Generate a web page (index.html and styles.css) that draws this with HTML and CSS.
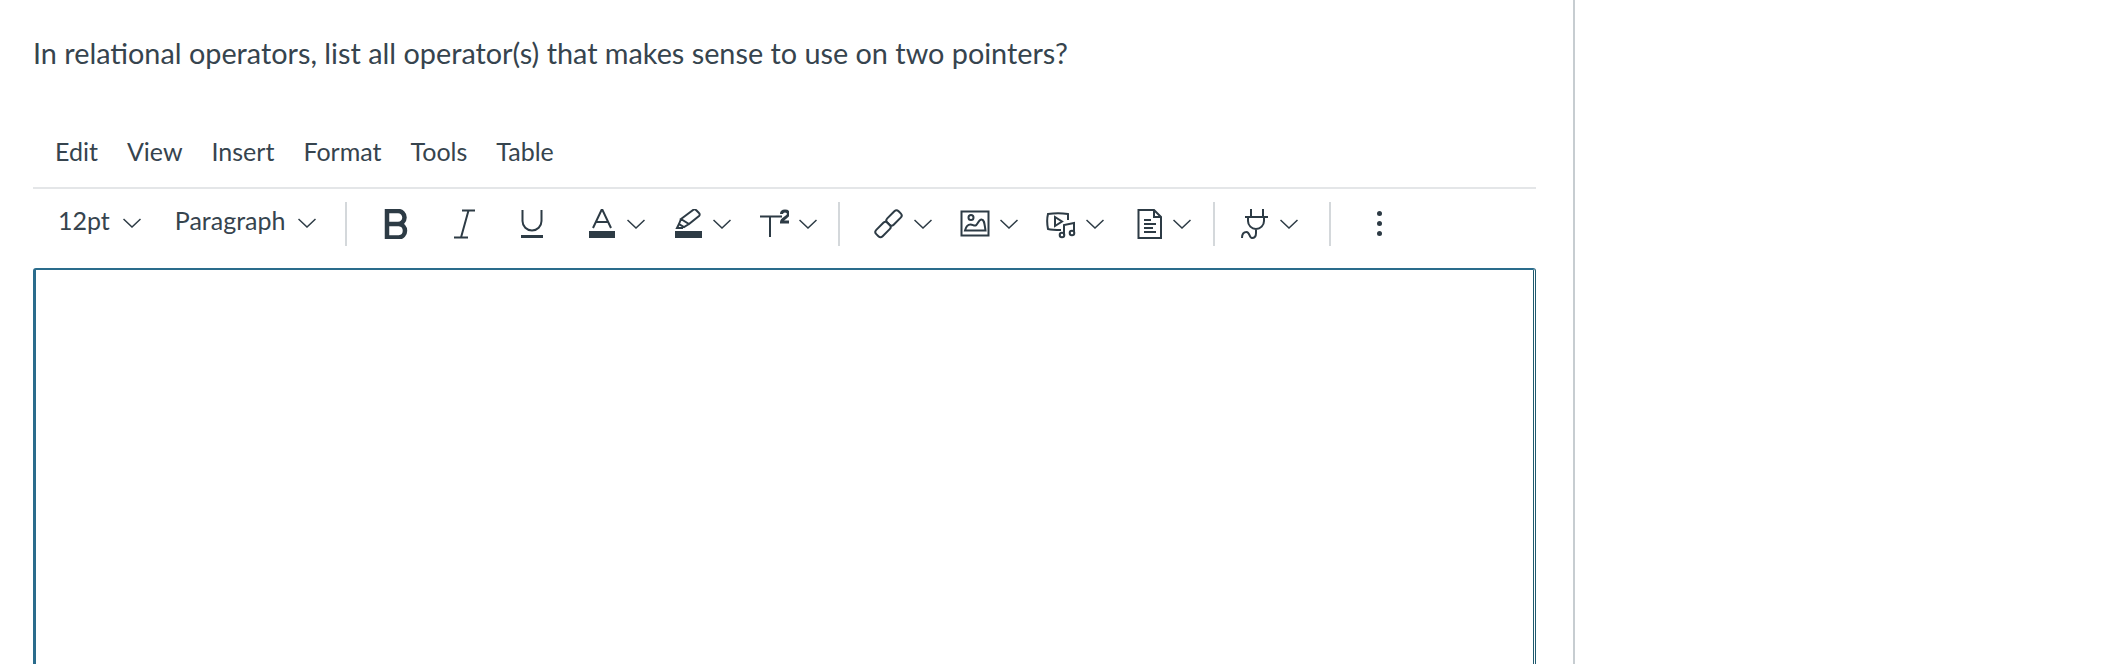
FILE: index.html
```html
<!DOCTYPE html>
<html lang="en">
<head>
    <meta charset="UTF-8">
    <title>Quiz question</title>
    <link rel="stylesheet" href="styles.css">
</head>
<body>
    <div class="main-column">
        <p class="question">In relational operators, list all operator(s) that makes sense to use on two pointers?</p>

        <div class="menubar">
            <span>Edit</span>
            <span>View</span>
            <span>Insert</span>
            <span>Format</span>
            <span>Tools</span>
            <span>Table</span>
        </div>

        <div class="toolbar">
            <div class="group group-format">
                <div class="select select-size">12pt <svg class="chevron" viewBox="0 0 18 10"><path d="M.5 1l8.500 8 8.500-8"/></svg></div>
                <div class="select">Paragraph <svg class="chevron" viewBox="0 0 18 10"><path d="M.5 1l8.500 8 8.500-8"/></svg></div>
            </div>

            <div class="group group-text">
                <svg class="icon tool-b" viewBox="0 0 30 30"><path class="heavy" d="M6 2h11a6.500 6.500 0 0 1 0 13H6zM6 15h12a6.800 6.800 0 0 1 0 13.500H6z"/></svg>
                <svg class="icon tool-i" viewBox="0 0 30 30"><path d="M10 1.500h13M2 28.500h14M16.500 1.500L9 28.500"/></svg>
                <svg class="icon tool-u" viewBox="0 0 30 30"><path d="M5.500 1v11a9.500 9.500 0 0 0 19 0V1"/><path class="mid" d="M4 27.500h22"/></svg>
                <div class="split split-first">
                    <svg class="icon" viewBox="0 0 30 30"><path d="M6 19L15 0l9 19M9 13h12"/><rect class="fill" x="2" y="22" width="26" height="7"/></svg>
                    <svg class="chevron" viewBox="0 0 18 10"><path d="M.5 1l8.500 8 8.500-8"/></svg>
                </div>
                <div class="split">
                    <svg class="icon" viewBox="0 0 30 30"><path d="M8 10L20 1a2 2 0 0 1 3 0l3 3a2 2 0 0 1 0 3L16 15zM8 10l-2 5 5 3 5-3M6 15l-2 4h6"/><rect class="fill" x="2" y="22" width="27" height="7"/></svg>
                    <svg class="chevron" viewBox="0 0 18 10"><path d="M.5 1l8.500 8 8.500-8"/></svg>
                </div>
                <div class="split">
                    <svg class="icon" viewBox="0 0 30 30"><path d="M1 7.500h22M11 7.500V28"/><path class="mid" d="M22.500 5c0-4 7-4 7 0 0 3-7 4.500-7 8h7.500"/></svg>
                    <svg class="chevron" viewBox="0 0 18 10"><path d="M.5 1l8.500 8 8.500-8"/></svg>
                </div>
            </div>

            <div class="group group-insert">
                <div class="split">
                    <svg class="icon" viewBox="0 0 30 30"><rect x="12" y="4.500" width="16" height="9" rx="3" transform="rotate(-45 20 9)"/><rect x="1" y="16" width="16" height="9" rx="3" transform="rotate(-45 9 20.500)"/></svg>
                    <svg class="chevron" viewBox="0 0 18 10"><path d="M.5 1l8.500 8 8.500-8"/></svg>
                </div>
                <div class="split">
                    <svg class="icon" viewBox="0 0 30 30"><rect x="1.500" y="2.500" width="27" height="24"/><circle cx="11" cy="8.500" r="2.500"/><path d="M5 21.500c1-4 3-6 5.500-6s3 1.500 5 1 3-6 6-6 3 5 4 11z"/></svg>
                    <svg class="chevron" viewBox="0 0 18 10"><path d="M.5 1l8.500 8 8.500-8"/></svg>
                </div>
                <div class="split">
                    <svg class="icon" viewBox="0 0 30 30"><path d="M15 21c-5 0-9 0-13-1-1-5-1-11 0-15 6-1 14-1 20 0v6"/><path d="M9 8v9l7-4.500zM18 26V16l10-2v9"/><circle cx="16" cy="26" r="2.300"/><circle cx="26" cy="24" r="2.300"/></svg>
                    <svg class="chevron" viewBox="0 0 18 10"><path d="M.5 1l8.500 8 8.500-8"/></svg>
                </div>
                <div class="split split-doc">
                    <svg class="icon" viewBox="0 0 30 30"><path d="M3.500 1H19l7 7v21H3.500zM19 1v7h7M9 11h7M9 15h12M9 19h9M9 23h12"/></svg>
                    <svg class="chevron" viewBox="0 0 18 10"><path d="M.5 1l8.500 8 8.500-8"/></svg>
                </div>
            </div>

            <div class="group group-plugin">
                <div class="split">
                    <svg class="icon" viewBox="0 0 30 30"><path d="M11 0v8M23 0v8M5 8h23M8 8v4a8 8 0 0 0 16 0V8M16 20v4c0 3-1 5-4 5s-2-6-5.500-6S2 26 2 29"/></svg>
                    <svg class="chevron" viewBox="0 0 18 10"><path d="M.5 1l8.500 8 8.500-8"/></svg>
                </div>
            </div>

            <div class="group-more">
                <span class="dot"></span>
                <span class="dot"></span>
                <span class="dot"></span>
            </div>
        </div>

        <div class="editor"></div>
    </div>
</body>
</html>
```

FILE: styles.css
```css
body {
    margin: 0;
    height: 664px;
    overflow: hidden;
    background: #fff;
    color: #36444e;
    font-family: 'Lato', sans-serif;
}

.main-column {
    box-sizing: border-box;
    width: 1575px;
    height: 664px;
    padding: 0 37px 0 33px;
    border-right: 2px solid #c7cdd1;
    overflow: hidden;
}

.question {
    margin: 0;
    padding-top: 35px;
    font-size: 28.8px;
    line-height: 36px;
}

.menubar {
    display: flex;
    gap: 29px;
    height: 58px;
    margin-top: 58px;
    padding-left: 22px;
    font-size: 25px;
    line-height: 45px;
    border-bottom: 2px solid #e4e6e8;
}

.toolbar {
    display: flex;
    align-items: center;
    height: 79px;
    padding: 0 0 10px 25px;
    box-sizing: border-box;
    font-size: 25px;
}

.group {
    display: flex;
    align-items: center;
    height: 44px;
    border-right: 2px solid #d4d8db;
}

.group-format {
    gap: 34px;
    padding-right: 29px;
}

.select {
    display: flex;
    align-items: center;
    gap: 13px;
    padding-bottom: 7px;
}

.select .chevron {
    margin-top: 5px;
}

.group-text {
    padding: 0 21px 0 34px;
}

.group-insert {
    gap: 28px;
    padding: 0 22px 0 34px;
}

.group-plugin {
    padding: 0 31px 0 25px;
}

.split {
    display: flex;
    align-items: center;
    gap: 10px;
    margin-left: 28px;
}

.split-first {
    margin-left: 40px;
}

.group-insert .split,
.group-plugin .split {
    margin-left: 0;
}

.group-insert .split-doc {
    margin-left: 3px;
    gap: 8px;
}

.tool-i {
    margin-left: 41px;
}

.tool-u {
    margin-left: 35px;
}

.icon {
    width: 30px;
    height: 30px;
    fill: none;
    stroke: #2d3b45;
    stroke-width: 2;
}

.icon .heavy {
    stroke-width: 4.5;
}

.icon .mid {
    stroke-width: 3;
}

.icon .fill {
    fill: #2d3b45;
    stroke: none;
}

.chevron {
    width: 18px;
    height: 10px;
    fill: none;
    stroke: #2d3b45;
    stroke-width: 1.5;
}

.group-more {
    display: flex;
    flex-direction: column;
    align-items: center;
    gap: 5px;
    margin-left: 46px;
}

.dot {
    width: 5px;
    height: 5px;
    border-radius: 50%;
    background: #2d3b45;
}

.editor {
    height: 500px;
    border: solid #2a6c8c;
    border-width: 2px 0 0 3px;
    border-right: 3px double #1f5a6e;
    border-radius: 3px;
}
```
